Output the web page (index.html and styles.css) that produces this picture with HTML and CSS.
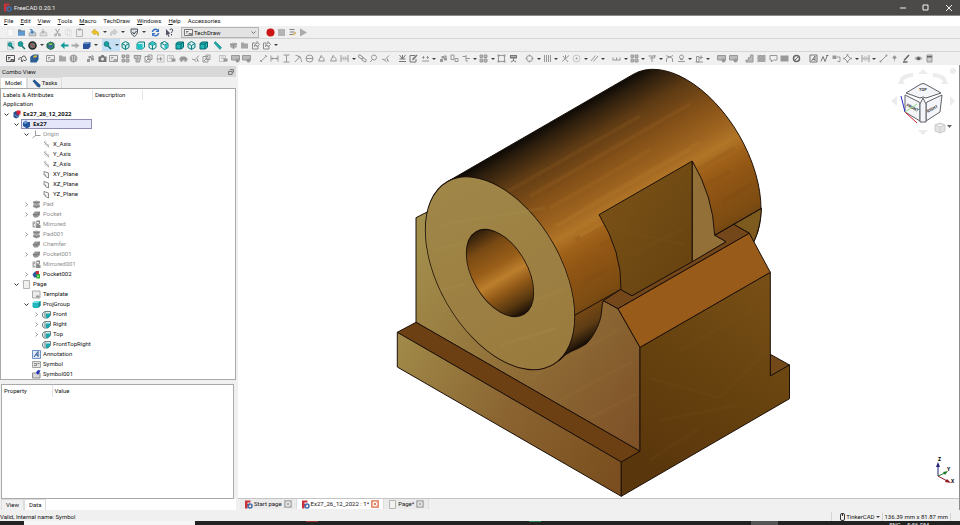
FILE: index.html
```
<!DOCTYPE html>
<html lang="en">
    <head>
        <meta charset="utf-8">
        <title>FreeCAD 0.20.1</title>
        <link rel="stylesheet" href="styles.css">
    </head>
    <body>

        <svg class="sprite" aria-hidden="true">
            <!-- file and edit -->
            <symbol id="new" viewBox="0 0 18 18"><path d="M4 2h10v14H4z" fill="#fafafa" stroke="#dcdcdc"/></symbol>
            <symbol id="open" viewBox="0 0 18 18"><path d="M2 3h6l1 2h7v10H2z" fill="#6b8499"/><path d="M3 7h13l-1 8H2z" fill="#5c9bd5"/></symbol>
            <symbol id="save" viewBox="0 0 18 18"><path d="M2 10l3-2h9l2 2v6H2z" fill="#c4c8cc" stroke="#8a9299"/><path d="M3 3c4-2 7 0 7 4h3l-5 5-4-5h3c0-2-1-3-4-4z" fill="#3f7fc0"/></symbol>
            <symbol id="saveas" viewBox="0 0 18 18"><path d="M2 10l3-2h9l2 2v6H2z" fill="#ddd" stroke="#a5a5a5"/><path d="M9 2v5h3l-4 4-4-4h3V2z" fill="#aaa"/></symbol>
            <symbol id="cut" viewBox="0 0 18 18"><path d="M5 2l6 10M13 2L7 12" fill="none" stroke="#9a9a9a" stroke-width="2"/><circle cx="5" cy="14" r="2" fill="none" stroke="#9a9a9a" stroke-width="2"/><circle cx="13" cy="14" r="2" fill="none" stroke="#9a9a9a" stroke-width="2"/></symbol>
            <symbol id="copy" viewBox="0 0 18 18"><path d="M3 2h8v11H3zM7 5h8v11H7z" fill="#f2f2f2" stroke="#d2d2d2"/></symbol>
            <symbol id="paste" viewBox="0 0 18 18"><path d="M3 3h12v14H3z" fill="#ededed" stroke="#b4b4b4" stroke-width="2"/><path d="M6 1h6v4H6z" fill="#a8a8a8"/></symbol>
            <symbol id="undo" viewBox="0 0 18 18"><path d="M1 8l7-6v4c6 0 9 4 6 10 0-4-2-5-6-5v3z" fill="#f0c420" stroke="#b8930c"/></symbol>
            <symbol id="redo" viewBox="0 0 18 18"><path d="M17 8l-7-6v4c-6 0-9 4-6 10 0-4 2-5 6-5v3z" fill="#cfcfcf" stroke="#b4b4b4"/></symbol>
            <symbol id="check" viewBox="0 0 18 18"><path d="M2 2h13v4c0 6-3 9-6 11-5-3-7-6-7-11z" fill="#dfe3e6" stroke="#4b5560" stroke-width="2"/><path d="M5 8l3 4 5-6" fill="none" stroke="#39424c" stroke-width="2"/></symbol>
            <symbol id="refresh" viewBox="0 0 18 18"><path d="M3 8a6 6 0 0 1 10-4M15 10a6 6 0 0 1-10 4" fill="none" stroke="#3473c0" stroke-width="3"/><path d="M16 1v7H9zM2 17v-7h7z" fill="#3473c0"/></symbol>
            <symbol id="whats" viewBox="0 0 18 18"><path d="M2 2l9 9-4 1 2 5-2 1-2-5-3 2z" fill="#556"/><path d="M10 4c1-4 7-2 5 2-1 2-2 1-2 4M13 12v3" fill="none" stroke="#36424e" stroke-width="2"/></symbol>
            <!-- macro -->
            <symbol id="record" viewBox="0 0 18 18"><circle cx="9" cy="9" r="8" fill="#cc1414"/></symbol>
            <symbol id="stop" viewBox="0 0 18 18"><path d="M2 2h14v14H2z" fill="#b4b4b4"/></symbol>
            <symbol id="macros" viewBox="0 0 18 18"><path d="M3 3h10M4 8h9M3 13h8" stroke="#7c7c7c" stroke-width="2"/><path d="M8 13l7-5 2 2-6 5z" fill="#d5ad5c"/></symbol>
            <symbol id="play" viewBox="0 0 18 18"><path d="M2 1l14 8-14 8z" fill="#a9a9a9"/></symbol>
            <!-- view -->
            <symbol id="fitall" viewBox="0 0 18 18"><path d="M3 1h13v16H3z" fill="#dcecec" stroke="#9fb4b4"/><circle cx="8" cy="7" r="4" fill="#16a3a3" stroke="#075e5e"/><path d="M10 10l5 5" stroke="#075e5e" stroke-width="3"/></symbol>
            <symbol id="lens" viewBox="0 0 18 18"><circle cx="7" cy="6" r="5" fill="#18a0a0" stroke="#0b6868"/><path d="M10 10l6 6" stroke="#0c7070" stroke-width="3"/></symbol>
            <symbol id="drawstyle" viewBox="0 0 18 18"><circle cx="9" cy="9" r="7" fill="#6b7373" stroke="#202626" stroke-width="3"/><path d="M5 5l8 8" stroke="#c33" stroke-width="2"/></symbol>
            <symbol id="bbox" viewBox="0 0 18 18"><path d="M2 6l7-4 7 3v9l-7 3-7-4z" fill="#2c8f5f" stroke="#1f5a50" stroke-width="2"/><path d="M5 6h8v7H5z" fill="#3c5fb0"/><path d="M6 5h6v3H6z" fill="#88c840"/></symbol>
            <symbol id="back" viewBox="0 0 18 18"><path d="M1 9l8-7v5h8v4H9v5z" fill="#169a9a"/></symbol>
            <symbol id="forward" viewBox="0 0 18 18"><path d="M17 9l-8-6v4H1v4h8v4z" fill="#aaa"/></symbol>
            <symbol id="linkcube" viewBox="0 0 18 18"><path d="M2 6l4-4h11v9l-4 5H2z" fill="#28539a"/><path d="M2 6l4-4h11l-4 4z" fill="#6f95ce"/></symbol>
            <symbol id="iso" viewBox="0 0 18 18"><path d="M9 1l7 4v8l-7 4-7-4V5zM2 5l7 4 7-4M9 9v8" fill="#c5eded" stroke="#0c7d80" stroke-width="2"/></symbol>
            <symbol id="front" viewBox="0 0 18 18"><path d="M2 5l4-3h11v10l-4 4H2z" fill="#bfeeee" stroke="#0b7b7f" stroke-width="2"/><path d="M2 6h11v10H2z" fill="#1fc3c5"/></symbol>
            <symbol id="top" viewBox="0 0 18 18"><path d="M9 1l7 4v8l-7 4-7-4V5zM2 5l7 4 7-4M9 9v8" fill="#dff5f5" stroke="#0c7d80" stroke-width="2"/><path d="M9 2l6 3-6 4-6-4z" fill="#25c3c5"/></symbol>
            <symbol id="right" viewBox="0 0 18 18"><path d="M2 4l7-3 7 4v8l-7 4-7-5zM2 4l7 4 7-3" fill="#dff5f5" stroke="#0c7d80" stroke-width="2"/><path d="M9 9l6-3v7l-6 3z" fill="#25c3c5"/></symbol>
            <symbol id="rear" viewBox="0 0 18 18"><path d="M2 5l4-3h11v10l-4 4H2z" fill="#20b6b9" stroke="#07676b" stroke-width="2"/><path d="M2 6h10v10M12 6l4-4" fill="none" stroke="#07676b" stroke-width="2"/></symbol>
            <symbol id="measure" viewBox="0 0 18 18"><path d="M2 4l3-3 12 12-3 4z" fill="#1cabad" stroke="#0b7175"/></symbol>
            <symbol id="part" viewBox="0 0 18 18"><path d="M2 6l6-3 8 2v7l-7 4-7-4z" fill="#b0b0b0"/><path d="M9 8v7M2 6l7 2 6-3" fill="none" stroke="#8b8b8b" stroke-width="2"/></symbol>
            <symbol id="folder" viewBox="0 0 18 18"><path d="M2 3h6l1 2h7v10H2z" fill="#a6a6a6"/></symbol>
            <symbol id="export" viewBox="0 0 18 18"><path d="M9 4H3v12h11v-5" fill="none" stroke="#8b8b8b" stroke-width="2"/><path d="M7 11c0-5 3-6 5-6V1l5 6-5 5V9c-2 0-4 0-5 2z" fill="none" stroke="#8b8b8b" stroke-width="2"/></symbol>
            <!-- techdraw pages and views -->
            <symbol id="page" viewBox="0 0 18 18"><path d="M1 3h16v12H1z" fill="#eee" stroke="currentColor" stroke-width="2"/><path d="M4 7h5M4 10h3M10 11h5v3h-5z" fill="none" stroke="currentColor" stroke-width="2"/></symbol>
            <symbol id="redraw" viewBox="0 0 18 18"><path d="M2 12c-2-5 4-6 5-3 1-7 9-6 8-1 3 1 2 5 0 5h-3M6 10l2 6 3-5" fill="none" stroke="currentColor" stroke-width="2"/></symbol>
            <symbol id="view" viewBox="0 0 18 18"><path d="M1 5l6-4h10v10l-4 6H1z" fill="#245c9c"/><path d="M1 6h10v10H1z" fill="#32608f"/><path d="M8 3h7l-3 4H6z" fill="#e7bd33"/></symbol>
            <symbol id="globe" viewBox="0 0 18 18"><circle cx="9" cy="9" r="7" fill="#ccc" stroke="currentColor" stroke-width="2"/><path d="M9 2v14M5 5v8M13 5v8" stroke="currentColor" stroke-width="2"/></symbol>
            <symbol id="cluster" viewBox="0 0 18 18"><path d="M5 4h6v5H5zM10 7h6v6h-6zM2 10h6v6H2z" fill="currentColor"/><path d="M11 1l5 4-4 2z" fill="currentColor"/></symbol>
            <symbol id="camera" viewBox="0 0 18 18"><path d="M1 5h4l2-3h4l2 3h4v11H1z" fill="currentColor"/><circle cx="9" cy="10" r="3" fill="#eee"/></symbol>
            <symbol id="blocks" viewBox="0 0 18 18"><path d="M2 2h5v5H2zM10 2h6v5h-6zM2 10h5v6H2zM10 10h6v6h-6z" fill="#bbb" stroke="currentColor" stroke-width="2"/></symbol>
            <symbol id="section" viewBox="0 0 18 18"><path d="M2 3h14l-3 13H6V9H3z" fill="#c4c4c4" stroke="currentColor" stroke-width="2"/><path d="M6 9h7M9 3v12" stroke="currentColor"/></symbol>
            <symbol id="boxarrow" viewBox="0 0 18 18"><path d="M3 2h13v14H3z" fill="none" stroke="currentColor"/><path d="M1 9h7V5l5 5-5 4v-3H1z" fill="currentColor"/></symbol>
            <symbol id="boxslash" viewBox="0 0 18 18"><path d="M2 5h10v11H2zM8 2h8v9H8z" fill="none" stroke="currentColor" stroke-width="2"/><path d="M4 14l6-6" stroke="currentColor" stroke-width="2"/></symbol>
            <symbol id="truck" viewBox="0 0 18 18"><path d="M1 9l3-4h8l5 4v4H1z" fill="currentColor"/><circle cx="5" cy="14" r="2" fill="currentColor"/><circle cx="13" cy="14" r="2" fill="currentColor"/></symbol>
            <symbol id="clip" viewBox="0 0 18 18"><path d="M1 3h12v12H1z" fill="none" stroke="currentColor" stroke-width="1"/><path d="M4 6h7M4 9h7" stroke="currentColor"/><path d="M9 9h8v6H9z" fill="currentColor"/></symbol>
            <!-- techdraw dimensions -->
            <symbol id="d-diag" viewBox="0 0 18 18"><path d="M3 15L15 4M2 12l4 4M12 2l4 4" fill="none" stroke="currentColor" stroke-width="2"/></symbol>
            <symbol id="d-h" viewBox="0 0 18 18"><path d="M2 3v12M16 3v12M2 9h14M5 7L3 9l2 2M13 7l2 2-2 2" fill="none" stroke="currentColor" stroke-width="2"/></symbol>
            <symbol id="d-v" viewBox="0 0 18 18"><path d="M3 2h12M3 16h12M9 2v14" fill="none" stroke="currentColor" stroke-width="2"/></symbol>
            <symbol id="d-rad" viewBox="0 0 18 18"><path d="M3 3c8 0 12 5 12 13M2 16l9-10M8 5h4v4" fill="none" stroke="currentColor" stroke-width="2"/></symbol>
            <symbol id="d-dia" viewBox="0 0 18 18"><circle cx="9" cy="9" r="7" fill="none" stroke="currentColor" stroke-width="2"/><path d="M2 9h14" stroke="currentColor" stroke-width="2"/></symbol>
            <symbol id="d-ang" viewBox="0 0 18 18"><path d="M9 2L3 14h12M6 7c5-3 9 1 8 7" fill="none" stroke="currentColor" stroke-width="2"/></symbol>
            <symbol id="d-ext" viewBox="0 0 18 18"><path d="M2 2v14M16 2v14" fill="none" stroke="currentColor" stroke-width="2"/><path d="M6 6h6v6H6zM2 9h14" fill="none" stroke="currentColor"/></symbol>
            <symbol id="link" viewBox="0 0 18 18"><rect x="1" y="3" width="9" height="5" rx="2" transform="rotate(35 5 5)" fill="none" stroke="currentColor" stroke-width="2"/><rect x="8" y="9" width="9" height="5" rx="2" transform="rotate(35 12 11)" fill="none" stroke="currentColor" stroke-width="2"/></symbol>
            <symbol id="balloon" viewBox="0 0 18 18"><circle cx="10" cy="7" r="5" fill="none" stroke="currentColor" stroke-width="2"/><path d="M7 11l-5 5" stroke="currentColor" stroke-width="2"/></symbol>
            <symbol id="axo" viewBox="0 0 18 18"><path d="M2 10l5 2 9-9M7 12l4 4M13 9v5h3" fill="none" stroke="currentColor" stroke-width="2"/></symbol>
            <!-- techdraw extensions -->
            <symbol id="stamp" viewBox="0 0 18 18"><path d="M3 2l6 8 6-8M9 2v7M3 10h12M2 15h14" fill="none" stroke="currentColor" stroke-width="2"/></symbol>
            <symbol id="edit" viewBox="0 0 18 18"><path d="M12 3H2v13h12v-6" fill="none" stroke="currentColor" stroke-width="2"/><path d="M7 9l8-8 2 2-7 8-4 2z" fill="currentColor"/></symbol>
            <symbol id="spread" viewBox="0 0 18 18"><path d="M2 14h14M2 7h5M11 7h5M5 4v6M13 4v6" fill="none" stroke="currentColor" stroke-width="2"/></symbol>
            <symbol id="twobox" viewBox="0 0 18 18"><path d="M2 2h6v9H2zM10 9h6v6h-6z" fill="none" stroke="currentColor" stroke-width="2"/></symbol>
            <symbol id="steps" viewBox="0 0 18 18"><path d="M1 5h7M8 2v12M8 9h8M8 14h4" fill="none" stroke="currentColor" stroke-width="2"/></symbol>
            <symbol id="frame" viewBox="0 0 18 18"><path d="M3 3h12v12H3z" fill="none" stroke="currentColor" stroke-width="2"/><path d="M1 1h4v4H1zM13 1h4v4h-4zM1 13h4v4H1zM13 13h4v4h-4z" fill="currentColor"/></symbol>
            <symbol id="desk" viewBox="0 0 18 18"><path d="M2 2h14v7H2z" fill="currentColor"/><path d="M4 5h10" stroke="#eee"/><path d="M9 9v5M4 16l5-3 5 3" fill="none" stroke="currentColor" stroke-width="2"/></symbol>
            <symbol id="target" viewBox="0 0 18 18"><circle cx="9" cy="9" r="6" fill="none" stroke="currentColor" stroke-width="2"/><path d="M9 1v4M9 13v4M1 9h4M13 9h4" stroke="currentColor" stroke-width="2"/></symbol>
            <symbol id="bars" viewBox="0 0 18 18"><path d="M3 2v14M7 2v14M11 2v14M15 2v14" stroke="currentColor" stroke-width="2"/></symbol>
            <symbol id="star" viewBox="0 0 18 18"><path d="M2 15L16 3M4 4l10 12M9 2v8" stroke="currentColor" stroke-width="2"/></symbol>
            <symbol id="circdot" viewBox="0 0 18 18"><circle cx="9" cy="9" r="7" fill="none" stroke="currentColor" stroke-width="1"/><circle cx="9" cy="9" r="2" fill="currentColor"/></symbol>
            <symbol id="parallel" viewBox="0 0 18 18"><path d="M2 14L11 3M7 15l9-11" stroke="currentColor" stroke-width="2"/></symbol>
            <symbol id="ticks" viewBox="0 0 18 18"><path d="M1 12h16M2 7v5M9 7v5M16 7v5" stroke="currentColor" stroke-width="2"/></symbol>
            <symbol id="tee" viewBox="0 0 18 18"><path d="M1 4h15M8 4v12M4 8h9M13 2v6" fill="none" stroke="currentColor" stroke-width="2"/></symbol>
            <symbol id="curve" viewBox="0 0 18 18"><path d="M2 3c4 3 10 3 14 0M3 16V9c3-3 9-3 12 0v7" fill="none" stroke="currentColor" stroke-width="2"/></symbol>
            <symbol id="person" viewBox="0 0 18 18"><circle cx="9" cy="6" r="4" fill="none" stroke="currentColor" stroke-width="2"/><path d="M2 15h14M6 11h6" stroke="currentColor" stroke-width="2"/></symbol>
            <symbol id="hole" viewBox="0 0 18 18"><path d="M3 16V5h5v11zM8 7h8M1 16h15M12 3v8" fill="none" stroke="currentColor" stroke-width="2"/></symbol>
            <symbol id="image" viewBox="0 0 18 18"><path d="M1 3h16v9H1z" fill="#bbb" stroke="currentColor" stroke-width="2"/><circle cx="13" cy="13" r="4" fill="currentColor"/></symbol>
            <symbol id="stairs" viewBox="0 0 18 18"><path d="M2 16v-4h5V7h4V2h5v14z" fill="#bbb" stroke="currentColor" stroke-width="2"/></symbol>
            <symbol id="hatch" viewBox="0 0 18 18"><path d="M1 2h16v14H1z" fill="#aaa"/><path d="M1 9l7-7M2 15L15 2M9 15l7-7" stroke="currentColor" stroke-width="2"/></symbol>
            <symbol id="callout" viewBox="0 0 18 18"><path d="M2 3h14v9H9l-4 4v-4H2z" fill="none" stroke="currentColor" stroke-width="2"/></symbol>
            <symbol id="block" viewBox="0 0 18 18"><path d="M1 3h16v12H1z" fill="currentColor"/></symbol>
            <symbol id="nosign" viewBox="0 0 18 18"><circle cx="9" cy="9" r="6" fill="none" stroke="#666" stroke-width="3"/><path d="M5 13l8-8" stroke="#666" stroke-width="2"/></symbol>
            <symbol id="annot" viewBox="0 0 18 18"><path d="M2 2h14v14H2z" fill="none" stroke="currentColor" stroke-width="2"/><path d="M5 14L12 4v10M7 11h5" fill="none" stroke="currentColor" stroke-width="2"/></symbol>
            <symbol id="poly" viewBox="0 0 18 18"><path d="M2 15L6 5l4 10 4-11M12 3h5" fill="none" stroke="currentColor" stroke-width="2"/></symbol>
            <symbol id="papers" viewBox="0 0 18 18"><path d="M1 3h8v7H1z" fill="currentColor"/><path d="M10 6h6v9h-5" fill="none" stroke="currentColor" stroke-width="2"/></symbol>
            <symbol id="diamond" viewBox="0 0 18 18"><path d="M9 3l6 6-6 6-6-6z" fill="none" stroke="currentColor" stroke-width="2"/><circle cx="9" cy="2" r="2" fill="currentColor"/><circle cx="9" cy="16" r="2" fill="currentColor"/><circle cx="2" cy="9" r="2" fill="currentColor"/><circle cx="16" cy="9" r="2" fill="currentColor"/></symbol>
            <symbol id="line" viewBox="0 0 18 18"><path d="M3 15L15 3" stroke="currentColor" stroke-width="2"/><circle cx="3" cy="15" r="2" fill="currentColor"/><circle cx="15" cy="3" r="2" fill="currentColor"/></symbol>
            <symbol id="cosmetic" viewBox="0 0 18 18"><path d="M9 3l4 4-4 4-4-4zM9 11v4" fill="currentColor" stroke="currentColor"/></symbol>
            <symbol id="pen" viewBox="0 0 18 18"><path d="M2 16h9M4 13L14 2" stroke="#666" stroke-width="3"/></symbol>
            <symbol id="eye" viewBox="0 0 18 18"><path d="M1 9c4-6 12-6 16 0-4 5-12 5-16 0z" fill="#aaa"/><circle cx="9" cy="9" r="3" fill="#555"/></symbol>
            <symbol id="sheet" viewBox="0 0 18 18"><path d="M4 2h10v14H4z" fill="#ccc" stroke="currentColor" stroke-width="2"/><path d="M4 4h10v3H4z" fill="#666"/></symbol>
            <!-- tree items -->
            <symbol id="t-doc" viewBox="0 0 18 18"><path d="M3 5l5-3 6 3v9l-6 3-5-3z" fill="#244f8d"/><path d="M9 1h8v8H9z" fill="#cf2436"/><path d="M5 9l6 5 4-4" fill="none" stroke="#7da1d2" stroke-width="2"/></symbol>
            <symbol id="t-body" viewBox="0 0 18 18"><path d="M2 5l6-4 3 3h5v9l-6 4-8-5z" fill="#23569b"/><path d="M2 5l6-4 3 4-4 3zM8 12l7-4" fill="#6d9bd3"/></symbol>
            <symbol id="t-origin" viewBox="0 0 18 18"><path d="M7 1v10h10M7 11l-6 5" fill="none" stroke="#9a9a9a" stroke-width="2"/></symbol>
            <symbol id="t-axis" viewBox="0 0 18 18"><path d="M4 3l4-1v7M4 8l9 7v-6H8" fill="none" stroke="#b4b4b4"/><path d="M4 4l10 9" stroke="#9a9a9a" stroke-width="2"/></symbol>
            <symbol id="t-plane" viewBox="0 0 18 18"><path d="M4 3l9 3v10l-6-3v-3H4z" fill="#f4f4f4" stroke="#8b8b8b" stroke-width="2"/></symbol>
            <symbol id="t-pad" viewBox="0 0 18 18"><path d="M2 3l7-2 7 2v3l-2 2 2 3v3l-7 3-7-3v-3l2-3-2-2z" fill="#a6a6a6"/><path d="M3 4l6 2 6-2M3 12l6 2 6-2" fill="none" stroke="#777" stroke-width="2"/></symbol>
            <symbol id="t-pocket" viewBox="0 0 18 18"><path d="M1 9l5-6h10v7l-5 5H4z" fill="#949494"/><path d="M2 9l8 1 5-6" fill="none" stroke="#777" stroke-width="2"/></symbol>
            <symbol id="t-mirror" viewBox="0 0 18 18"><path d="M1 3h6v12H1z" fill="#aaa"/><path d="M9 1h7v6l-2 3h3v6H8z" fill="#8a8a8a"/><path d="M10 4h4v3h-4zM4 8h2v4H4z" fill="#eee"/></symbol>
            <symbol id="t-tip" viewBox="0 0 18 18"><path d="M1 9l5-6h6v12H4z" fill="#2d55a0"/><path d="M8 2h6v6H8z" fill="#c8303c"/><path d="M9 8h7v9H9z" fill="#2cb32c"/><path d="M11 11h2v3h-2z" fill="#fff"/></symbol>
            <symbol id="t-page" viewBox="0 0 18 18"><path d="M3 1h12v16H3z" fill="#f1f1ef" stroke="#b4b4b0" stroke-width="2"/></symbol>
            <symbol id="t-template" viewBox="0 0 18 18"><path d="M1 2h15v14H1z" fill="#ececec" stroke="#aaa" stroke-width="2"/><path d="M8 11h7v4H8z" fill="#999"/></symbol>
            <symbol id="t-group" viewBox="0 0 18 18"><path d="M1 6l5-4h11v9l-5 5H3l-2-3z" fill="#1fb8bd"/><path d="M1 6l5-4h11l-5 4z" fill="#72e0e0"/><path d="M13 6l4-4v9l-4 5z" fill="#15898f"/></symbol>
            <symbol id="t-view" viewBox="0 0 18 18"><path d="M1 7l4-4h12v8l-5 5H4l-3-4z" fill="#dfeaea" stroke="#6f8486" stroke-width="2"/><path d="M8 7h8v4l-4 5H8z" fill="#19a9ad"/><path d="M6 4v10" stroke="#6f8486" stroke-width="2"/></symbol>
            <symbol id="t-annot" viewBox="0 0 18 18"><path d="M1 1h16v16H1z" fill="#dce8f6" stroke="#6c93c4" stroke-width="2"/><path d="M4 14L12 3v11M7 10h6" fill="none" stroke="#35588c" stroke-width="2"/></symbol>
            <symbol id="t-symbol" viewBox="0 0 18 18"><path d="M1 3h16v12H1z" fill="#e4e4e2" stroke="#a4a4a2" stroke-width="2"/><path d="M4 7h5v4H4M11 7h4" fill="none" stroke="#8a8a8a" stroke-width="2"/></symbol>
            <symbol id="t-touched" viewBox="0 0 18 18"><path d="M1 6h15v10H1z" fill="#d8d8d8" stroke="#8b8b8b" stroke-width="2"/><path d="M8 5l4 5 5-9-5-1z" fill="#2533b5"/></symbol>
            <!-- window -->
            <symbol id="logo" viewBox="0 0 18 18"><path d="M2 1h11v4H7v3h4v4H7v5H2z" fill="#cb333b"/><circle cx="12" cy="12" r="4" fill="none" stroke="#3f6eab" stroke-width="3"/></symbol>
            <symbol id="close" viewBox="0 0 18 18"><path d="M2 2h14v14H2z" fill="none" stroke="currentColor" stroke-width="3"/><path d="M6 6l6 6M12 6l-6 6" stroke="currentColor" stroke-width="2"/></symbol>
            <symbol id="chev-down" viewBox="0 0 10 10"><path d="M1 3l4 4 4-4" fill="none" stroke="currentColor" stroke-width="2"/></symbol>
            <symbol id="chev-right" viewBox="0 0 10 10"><path d="M3 1l4 4-4 4" fill="none" stroke="currentColor" stroke-width="1"/></symbol>
        </svg>

        <header class="titlebar">
            <svg class="icon"><use href="#logo"/></svg>
            <span class="title">FreeCAD 0.20.1</span>
            <button title="Minimize"><svg viewBox="0 0 8 8"><path d="M1 4h6"/></svg></button>
            <button title="Maximize"><svg viewBox="0 0 8 8"><path d="M1 1h5v5H1z"/></svg></button>
            <button title="Close"><svg viewBox="0 0 8 8"><path d="M1 1l6 6M7 1L1 7"/></svg></button>
        </header>

        <nav class="menubar">
            <button><u>F</u>ile</button>
            <button><u>E</u>dit</button>
            <button><u>V</u>iew</button>
            <button><u>T</u>ools</button>
            <button><u>M</u>acro</button>
            <button>TechDraw</button>
            <button><u>W</u>indows</button>
            <button><u>H</u>elp</button>
            <button>Accessories</button>
        </nav>

        <div class="toolbar">
            <i class="handle"></i>
            <button title="New"><svg><use href="#new"/></svg></button>
            <button title="Open"><svg><use href="#open"/></svg></button>
            <button title="Save"><svg><use href="#save"/></svg></button>
            <button title="Save as"><svg><use href="#saveas"/></svg></button>
            <i class="sep"></i>
            <button title="Cut"><svg><use href="#cut"/></svg></button>
            <button title="Copy"><svg><use href="#copy"/></svg></button>
            <button title="Paste"><svg><use href="#paste"/></svg></button>
            <i class="handle"></i>
            <button title="Undo"><svg><use href="#undo"/></svg></button>
            <button class="drop" title="Undo list"></button>
            <button title="Redo"><svg><use href="#redo"/></svg></button>
            <button class="drop" title="Redo list"></button>
            <i class="sep"></i>
            <button title="Validate"><svg><use href="#check"/></svg></button>
            <button class="drop" title="More"></button>
            <i class="sep"></i>
            <button title="Refresh"><svg><use href="#refresh"/></svg></button>
            <i class="sep"></i>
            <button title="What's this?"><svg><use href="#whats"/></svg></button>
            <i class="handle"></i>
            <label class="workbench">
                <svg class="icon"><use href="#page"/></svg>
                <select aria-label="Workbench">
                    <option selected>TechDraw</option>
                    <option>Part Design</option>
                    <option>Sketcher</option>
                </select>
                <svg class="chevron"><use href="#chev-down"/></svg>
            </label>
            <i class="handle"></i>
            <button title="Record macro"><svg><use href="#record"/></svg></button>
            <button title="Stop macro"><svg><use href="#stop"/></svg></button>
            <button title="Macros"><svg><use href="#macros"/></svg></button>
            <button title="Run macro"><svg><use href="#play"/></svg></button>
        </div>

        <div class="toolbar">
            <i class="handle"></i>
            <button title="Fit all"><svg><use href="#fitall"/></svg></button>
            <button title="Fit selection"><svg><use href="#lens"/></svg></button>
            <button title="Draw style"><svg><use href="#drawstyle"/></svg></button>
            <button class="drop" title="Draw styles"></button>
            <button title="Bounding box"><svg><use href="#bbox"/></svg></button>
            <i class="sep"></i>
            <button title="Back"><svg><use href="#back"/></svg></button>
            <button title="Forward"><svg><use href="#forward"/></svg></button>
            <button title="Linked object"><svg><use href="#linkcube"/></svg></button>
            <button class="drop" title="Link navigation"></button>
            <i class="sep"></i>
            <span class="active">
                <button title="Sync view"><svg><use href="#lens"/></svg></button>
                <button class="drop" title="Sync options"></button>
            </span>
            <button title="Isometric"><svg><use href="#iso"/></svg></button>
            <i class="sep"></i>
            <span class="wide">
                <button title="Front"><svg><use href="#front"/></svg></button>
                <button title="Top"><svg><use href="#top"/></svg></button>
                <button title="Right"><svg><use href="#right"/></svg></button>
            </span>
            <i class="sep"></i>
            <span class="wide">
                <button title="Rear"><svg><use href="#rear"/></svg></button>
                <button title="Bottom"><svg><use href="#iso"/></svg></button>
                <button title="Left"><svg><use href="#rear"/></svg></button>
            </span>
            <i class="sep"></i>
            <button title="Measure"><svg><use href="#measure"/></svg></button>
            <i class="handle"></i>
            <button title="Create part"><svg><use href="#part"/></svg></button>
            <button title="Create group"><svg><use href="#folder"/></svg></button>
            <button title="Make link"><svg><use href="#export"/></svg></button>
            <button title="Link actions"><svg><use href="#export"/></svg></button>
            <button class="drop" title="Link action list"></button>
        </div>

        <div class="toolbar techdraw">
            <i class="handle"></i>
            <button class="dark" title="Insert page"><svg><use href="#page"/></svg></button>
            <button class="dark" title="Redraw page"><svg><use href="#redraw"/></svg></button>
            <button title="Insert view"><svg><use href="#view"/></svg></button>
            <i class="handle"></i>
            <button title="Page from template"><svg><use href="#page"/></svg></button>
            <button title="Open folder"><svg><use href="#folder"/></svg></button>
            <button title="Web view"><svg><use href="#globe"/></svg></button>
            <i class="handle"></i>
            <button title="Insert view"><svg><use href="#cluster"/></svg></button>
            <button class="mid" title="Active view"><svg><use href="#camera"/></svg></button>
            <button title="Projection group"><svg><use href="#page"/></svg></button>
            <button title="Group"><svg><use href="#blocks"/></svg></button>
            <button title="Section view"><svg><use href="#section"/></svg></button>
            <button title="Detail view"><svg><use href="#boxslash"/></svg></button>
            <button title="Draft view"><svg><use href="#boxarrow"/></svg></button>
            <button title="Arch view"><svg><use href="#clip"/></svg></button>
            <button title="Spreadsheet view"><svg><use href="#truck"/></svg></button>
            <button title="Move view"><svg><use href="#axo"/></svg></button>
            <button title="Share view"><svg><use href="#boxslash"/></svg></button>
            <i class="handle"></i>
            <button title="Clip group"><svg><use href="#clip"/></svg></button>
            <button title="Add to clip"><svg><use href="#image"/></svg></button>
            <button title="Remove from clip"><svg><use href="#image"/></svg></button>
            <i class="handle"></i>
            <button title="Length"><svg><use href="#d-diag"/></svg></button>
            <button title="Horizontal"><svg><use href="#d-h"/></svg></button>
            <button title="Vertical"><svg><use href="#d-v"/></svg></button>
            <button title="Radius"><svg><use href="#d-rad"/></svg></button>
            <button title="Diameter"><svg><use href="#d-dia"/></svg></button>
            <button title="Angle"><svg><use href="#d-ang"/></svg></button>
            <button title="3-point angle"><svg><use href="#d-ang"/></svg></button>
            <button title="Extent"><svg><use href="#d-ext"/></svg></button>
            <button class="drop" title="Extents"></button>
            <button title="Link dimension"><svg><use href="#link"/></svg></button>
            <button title="Balloon"><svg><use href="#balloon"/></svg></button>
            <button title="Axonometric"><svg><use href="#axo"/></svg></button>
            <i class="handle"></i>
            <button class="mid" title="Line attributes"><svg><use href="#stamp"/></svg></button>
            <button class="mid" title="Edit"><svg><use href="#edit"/></svg></button>
            <button title="Extend line"><svg><use href="#spread"/></svg></button>
            <button class="drop" title="Extend or shorten"></button>
            <button title="Lock view"><svg><use href="#cluster"/></svg></button>
            <button title="Position view"><svg><use href="#twobox"/></svg></button>
            <button title="Position chain"><svg><use href="#steps"/></svg></button>
            <button class="drop" title="Positions"></button>
            <button title="Cascade"><svg><use href="#blocks"/></svg></button>
            <button class="drop" title="Cascades"></button>
            <button title="Area"><svg><use href="#frame"/></svg></button>
            <button class="mid" title="Customize"><svg><use href="#desk"/></svg></button>
            <i class="handle"></i>
            <button title="Circle centerlines"><svg><use href="#target"/></svg></button>
            <button class="drop" title="Centerlines"></button>
            <button title="Thread"><svg><use href="#bars"/></svg></button>
            <button class="drop" title="Threads"></button>
            <button title="Intersection"><svg><use href="#star"/></svg></button>
            <button title="Cosmetic circle"><svg><use href="#circdot"/></svg></button>
            <button class="drop" title="Circles"></button>
            <button title="Parallel line"><svg><use href="#parallel"/></svg></button>
            <button class="drop" title="Lines"></button>
            <i class="handle"></i>
            <button title="Chain dimension"><svg><use href="#ticks"/></svg></button>
            <button class="drop" title="Chains"></button>
            <button title="Coordinate dimension"><svg><use href="#blocks"/></svg></button>
            <button class="drop" title="Coordinates"></button>
            <button title="Chamfer dimension"><svg><use href="#tee"/></svg></button>
            <button class="drop" title="Chamfers"></button>
            <button title="Arc length"><svg><use href="#curve"/></svg></button>
            <button title="Prefix"><svg><use href="#person"/></svg></button>
            <button class="drop" title="Prefixes"></button>
            <button title="Decimals"><svg><use href="#hole"/></svg></button>
            <button class="drop" title="Decimal places"></button>
            <i class="handle"></i>
            <button title="Export SVG"><svg><use href="#image"/></svg></button>
            <button title="Export DXF"><svg><use href="#image"/></svg></button>
            <i class="handle"></i>
            <button title="Hatch"><svg><use href="#stairs"/></svg></button>
            <button title="Geometric hatch"><svg><use href="#hatch"/></svg></button>
            <button title="Insert symbol"><svg><use href="#callout"/></svg></button>
            <button title="Insert image"><svg><use href="#block"/></svg></button>
            <button title="Toggle frames"><svg><use href="#nosign"/></svg></button>
            <i class="handle"></i>
            <button class="mid" title="Annotation"><svg><use href="#annot"/></svg></button>
            <button class="mid" title="Leader line"><svg><use href="#poly"/></svg></button>
            <button title="Rich text"><svg><use href="#papers"/></svg></button>
            <button title="Vertex"><svg><use href="#diamond"/></svg></button>
            <button class="drop" title="Vertices"></button>
            <button title="Centerline"><svg><use href="#d-ext"/></svg></button>
            <button class="drop" title="Face centerlines"></button>
            <button title="Cosmetic line"><svg><use href="#line"/></svg></button>
            <button title="Remove cosmetic"><svg><use href="#cosmetic"/></svg></button>
            <button title="Line style"><svg><use href="#pen"/></svg></button>
            <button title="Show all"><svg><use href="#eye"/></svg></button>
            <button title="Weld symbol"><svg><use href="#sheet"/></svg></button>
        </div>

        <main>
            <aside class="combo">
                <div class="docktitle">
                    <span>Combo View</span>
                    <button title="Float"><svg viewBox="0 0 10 10"><path d="M3 1h6v5M1 4h6v5H1z"/></svg></button>
                </div>
                <div class="tabs">
                    <button class="selected">Model</button>
                    <button class="tasks"><svg class="icon" viewBox="0 0 18 18"><path d="M1 4l4-3 12 11-1 5-5-1z" fill="#25588f"/></svg>Tasks</button>
                </div>

                <div class="tree">
                    <div class="head"><span>Labels &amp; Attributes</span><span>Description</span></div>
                    <div class="application">Application</div>
                    <ul>
                        <li>
                            <div class="row bold"><button class="toggle" title="Collapse"><svg><use href="#chev-down"/></svg></button><svg class="icon"><use href="#t-doc"/></svg>Ex27_26_12_2022</div>
                            <ul>
                                <li>
                                    <div class="row bold"><button class="toggle" title="Collapse"><svg><use href="#chev-down"/></svg></button><span class="current"><svg class="icon"><use href="#t-body"/></svg>Ex27</span></div>
                                    <ul>
                                        <li>
                                            <div class="row off"><button class="toggle" title="Collapse"><svg><use href="#chev-down"/></svg></button><svg class="icon"><use href="#t-origin"/></svg>Origin</div>
                                            <ul>
                                                <li class="row leaf"><svg class="icon"><use href="#t-axis"/></svg>X_Axis</li>
                                                <li class="row leaf"><svg class="icon"><use href="#t-axis"/></svg>Y_Axis</li>
                                                <li class="row leaf"><svg class="icon"><use href="#t-axis"/></svg>Z_Axis</li>
                                                <li class="row leaf"><svg class="icon"><use href="#t-plane"/></svg>XY_Plane</li>
                                                <li class="row leaf"><svg class="icon"><use href="#t-plane"/></svg>XZ_Plane</li>
                                                <li class="row leaf"><svg class="icon"><use href="#t-plane"/></svg>YZ_Plane</li>
                                            </ul>
                                        </li>
                                        <li class="row off"><button class="toggle" title="Expand"><svg><use href="#chev-right"/></svg></button><svg class="icon"><use href="#t-pad"/></svg>Pad</li>
                                        <li class="row off"><button class="toggle" title="Expand"><svg><use href="#chev-right"/></svg></button><svg class="icon"><use href="#t-pocket"/></svg>Pocket</li>
                                        <li class="row off leaf"><svg class="icon"><use href="#t-mirror"/></svg>Mirrored</li>
                                        <li class="row off"><button class="toggle" title="Expand"><svg><use href="#chev-right"/></svg></button><svg class="icon"><use href="#t-pad"/></svg>Pad001</li>
                                        <li class="row off leaf"><svg class="icon"><use href="#t-pocket"/></svg>Chamfer</li>
                                        <li class="row off"><button class="toggle" title="Expand"><svg><use href="#chev-right"/></svg></button><svg class="icon"><use href="#t-pocket"/></svg>Pocket001</li>
                                        <li class="row off leaf"><svg class="icon"><use href="#t-mirror"/></svg>Mirrored001</li>
                                        <li class="row"><button class="toggle" title="Expand"><svg><use href="#chev-right"/></svg></button><svg class="icon"><use href="#t-tip"/></svg>Pocket002</li>
                                    </ul>
                                </li>
                                <li>
                                    <div class="row"><button class="toggle" title="Collapse"><svg><use href="#chev-down"/></svg></button><svg class="icon"><use href="#t-page"/></svg>Page</div>
                                    <ul>
                                        <li class="row leaf"><svg class="icon"><use href="#t-template"/></svg>Template</li>
                                        <li>
                                            <div class="row"><button class="toggle" title="Collapse"><svg><use href="#chev-down"/></svg></button><svg class="icon"><use href="#t-group"/></svg>ProjGroup</div>
                                            <ul>
                                                <li class="row"><button class="toggle" title="Expand"><svg><use href="#chev-right"/></svg></button><svg class="icon"><use href="#t-view"/></svg>Front</li>
                                                <li class="row"><button class="toggle" title="Expand"><svg><use href="#chev-right"/></svg></button><svg class="icon"><use href="#t-view"/></svg>Right</li>
                                                <li class="row"><button class="toggle" title="Expand"><svg><use href="#chev-right"/></svg></button><svg class="icon"><use href="#t-view"/></svg>Top</li>
                                                <li class="row leaf"><svg class="icon"><use href="#t-view"/></svg>FrontTopRight</li>
                                            </ul>
                                        </li>
                                        <li class="row leaf"><svg class="icon"><use href="#t-annot"/></svg>Annotation</li>
                                        <li class="row leaf"><svg class="icon"><use href="#t-symbol"/></svg>Symbol</li>
                                        <li class="row leaf"><svg class="icon"><use href="#t-touched"/></svg>Symbol001</li>
                                    </ul>
                                </li>
                            </ul>
                        </li>
                    </ul>
                </div>

                <div class="properties">
                    <table>
                        <tr><th>Property</th><th>Value</th></tr>
                    </table>
                </div>
                <div class="tabs bottom">
                    <button>View</button>
                    <button class="selected">Data</button>
                </div>
            </aside>

            <section class="mdi">
                <svg class="scene" viewBox="238 65 721 433" role="img" aria-label="Bearing block">
                    <defs>
                        <linearGradient id="g-cyl" gradientUnits="userSpaceOnUse" x1="447" y1="182" x2="553" y2="365">
                            <stop offset="0" stop-color="#0c0905"/>
                            <stop offset=".05" stop-color="#2b1d0d"/>
                            <stop offset=".16" stop-color="#5e3b14"/>
                            <stop offset=".3" stop-color="#855118"/>
                            <stop offset=".42" stop-color="#9d631f"/>
                            <stop offset=".5" stop-color="#b27628"/>
                            <stop offset=".57" stop-color="#9f6119"/>
                            <stop offset=".66" stop-color="#905514"/>
                            <stop offset=".82" stop-color="#7d4c12"/>
                            <stop offset=".92" stop-color="#5e3c14"/>
                            <stop offset=".97" stop-color="#2d1d0c"/>
                            <stop offset="1" stop-color="#080502"/>
                        </linearGradient>
                        <linearGradient id="g-hole" x1=".15" y1=".15" x2=".85" y2=".85">
                            <stop offset="0" stop-color="#2e1e0c"/>
                            <stop offset=".2" stop-color="#7a4a13"/>
                            <stop offset=".42" stop-color="#9a5f19"/>
                            <stop offset=".56" stop-color="#bc7f2d"/>
                            <stop offset=".7" stop-color="#935a18"/>
                            <stop offset=".88" stop-color="#55360f"/>
                            <stop offset="1" stop-color="#1b1007"/>
                        </linearGradient>
                        <linearGradient id="g-disk" x1="0" y1="0" x2="1" y2="1">
                            <stop offset="0" stop-color="#a0894a"/>
                            <stop offset="1" stop-color="#99783c"/>
                        </linearGradient>
                        <linearGradient id="g-front" gradientUnits="userSpaceOnUse" x1="400" y1="260" x2="640" y2="440">
                            <stop offset="0" stop-color="#a38f4c"/>
                            <stop offset=".5" stop-color="#916f38"/>
                            <stop offset="1" stop-color="#7e5127"/>
                        </linearGradient>
                        <linearGradient id="g-foot" gradientUnits="userSpaceOnUse" x1="397" y1="350" x2="621" y2="480">
                            <stop offset="0" stop-color="#a08948"/>
                            <stop offset=".5" stop-color="#8a6330"/>
                            <stop offset="1" stop-color="#7a4e1e"/>
                        </linearGradient>
                        <linearGradient id="g-side" gradientUnits="userSpaceOnUse" x1="770" y1="290" x2="660" y2="470">
                            <stop offset="0" stop-color="#774e15"/>
                            <stop offset=".5" stop-color="#66420f"/>
                            <stop offset="1" stop-color="#5a360c"/>
                        </linearGradient>
                        <linearGradient id="g-slot" x1="0" y1="0" x2="1" y2="1">
                            <stop offset="0" stop-color="#7d5418"/>
                            <stop offset="1" stop-color="#65410f"/>
                        </linearGradient>
                        <path id="cylinder" d="M447.2 181.8L633.5 74.2A105.6 61 60 0 1 739.1 257.2L552.8 364.8Z"/>
                    </defs>

                    <g class="solid">
                        <use href="#cylinder" fill="url(#g-cyl)"/>
                        <g class="grain">
                            <path d="M500 196L640 116M530 196L690 104M585 208L700 142M550 208L650 150" stroke="#d08a35"/>
                            <path d="M575 240L735 148M600 246L730 171M584 282L606 270M722 202L752 184" stroke="#6b3d0c"/>
                            <path d="M556 226L690 149M580 236L606 221" stroke="#e0a850"/>
                        </g>
                        <path d="M733.7 224.3L761.5 208.3Q760.5 228 753.7 242L749.3 233.3Z" fill="#7d5b1e"/>
                        <path d="M416 217.7L430 210.5L470 300L559.3 360.7Q566 353.5 571 351.5Q580 348 586 344C593 338 601 322 601.5 312Q602 304 603.3 300.7L618 308.7L640 347.3V451.3L416 322.3Z" fill="url(#g-front)"/>
                        <path d="M397.3 332.3L416 322.3L640 451.3L621.3 462Z" fill="#6c4013"/>
                        <path d="M397.3 332.3V367L621.3 496.3V462Z" fill="url(#g-foot)"/>
                        <path d="M770.3 354.3L789.5 365L770.3 376Z" fill="#74491a"/>
                        <path d="M640 347.3L770.3 272.3V376L789.5 365V398.7L621.3 496.3V462L640 451.3Z" fill="url(#g-side)"/>
                        <path d="M603.3 300.7L620.5 289.5L632 295.7L726 241.7L714.7 235.3L733.7 224.3L749.3 233.3L618 308.7Z" fill="#74471a"/>
                        <path d="M618 308.7L749.3 233.3L770.3 272.3L640 347.3Z" fill="#995b19"/>
                        <path d="M599 214.7L692.3 161V261.7L632 295.7L621 289.7Q622 252 599 214.7Z" fill="url(#g-slot)"/>
                        <path d="M692.3 161Q713 196 714.7 235.3L726 241.7L692.3 261.7Z" fill="#947039"/>
                        <circle r="86.3" transform="matrix(.866 .5 0 1 500 273.3)" fill="url(#g-disk)"/>
                        <circle r="38.9" transform="matrix(.866 .5 0 1 500 273)" fill="url(#g-hole)"/>
                        <path d="M574.3 315.5L620.5 289.5M714.7 235.3L761.5 208.3" fill="none"/>
                    </g>
                    <g class="grain wood">
                        <path d="M440 225L545 208M432 250L466 243M440 290L466 284M535 300L564 290M500 345L556 328" stroke="#b49c58"/>
                        <path d="M560 400L632 362M530 378L622 328M590 418L636 394" stroke="#a57c42"/>
                        <path d="M650 378L720 398L766 352M660 420L740 405M680 350L760 306M650 460L700 428" stroke="#805818"/>
                        <path d="M620 230L685 245M628 255L686 228" stroke="#865a1c"/>
                    </g>

                    <!-- navigation cube -->
                    <g class="navcube">
                        <path class="arrow" d="M923 69l5 5h-10zM923 135l5-5h-10zM891 101l6-5v10zM955 101l-5-5v10zM898 84l3-7c4-3 8-4 12-4v4c-4 0-7 1-10 4l2 3zM948 84l-3-7c-4-3-8-4-12-4v4c4 0 7 1 10 4l-2 3z"/>
                        <circle class="arrow" cx="953" cy="71" r="3"/>
                        <path d="M906 93L921 84Q923 83 925 84L941 93L926 98L923 97L920 98Z"/>
                        <path d="M905 95L919 102Q920 103 920 105V121L905 112Z"/>
                        <path d="M942 95L927 102Q926 103 926 105V121L940 112Z"/>
                        <path d="M923 98L926 104V122H920V104Z"/>
                        <text x="923" y="91">TOP</text>
                        <text x="912" y="109" transform="rotate(27 912 109)">FRONT</text>
                        <text x="933" y="110" transform="rotate(-27 933 110)">RIGHT</text>
                        <path class="z" d="M901 96L905 112"/>
                        <path class="x" d="M905 112L917 123"/>
                        <path class="y" d="M905 112L917 104"/>
                        <path class="mini" d="M935 125l5-2 5 2v6l-5 2-5-2zM935 125l5 2 5-2M940 127v6"/>
                        <path class="menu" d="M947 125h5l-2.500 3z"/>
                    </g>

                    <!-- axis cross -->
                    <g class="axes">
                        <path d="M938 476V466" stroke="#23237c"/>
                        <path d="M938 476L945 473" stroke="#227a2a"/>
                        <path d="M938 476L947 481" stroke="#8d1620"/>
                        <path d="M938 462l2 5h-4z" fill="#23237c"/>
                        <path d="M948 471l-3 4-2-3z" fill="#227a2a"/>
                        <path d="M951 483l-6-1 2-3z" fill="#8d1620"/>
                        <text x="938" y="461">Z</text>
                        <text x="947" y="471">Y</text>
                        <text x="951" y="483">X</text>
                    </g>
                </svg>

                <div class="doctabs">
                    <div class="doctab"><svg class="icon"><use href="#logo"/></svg><span>Start page</span><button title="Close"><svg><use href="#close"/></svg></button></div>
                    <div class="doctab selected"><svg class="icon"><use href="#logo"/></svg><span>Ex27_26_12_2022 : 1*</span><button title="Close"><svg><use href="#close"/></svg></button></div>
                    <div class="doctab"><svg class="icon"><use href="#t-page"/></svg><span>Page*</span><button title="Close"><svg><use href="#close"/></svg></button></div>
                </div>
            </section>
        </main>

        <footer class="statusbar">
            <span class="message">Valid, Internal name: Symbol</span>
            <button class="nav"><svg viewBox="0 0 10 16"><rect x="1" y="1" width="8" height="14" rx="3"/><path d="M5 1v5"/></svg>TinkerCAD<i class="down"></i></button>
            <span class="dims">136.39 mm x 81.87 mm</span>
        </footer>

        <div class="taskbar">
            <span class="search"></span>
            <span class="apps"><i class="red"></i><i class="green"></i><i class="current"></i></span>
            <span class="clock">ENG</span>
            <span class="clock">5:56 PM</span>
        </div>

    </body>
</html>
```
FILE: styles.css
```
* { margin: 0; padding: 0; box-sizing: border-box; font-family: Roboto, "Open Sans", sans-serif; font-size: 6px; line-height: 8px; }
html, body { width: 100%; height: 100%; overflow: hidden; }
body { display: flex; flex-direction: column; background: #f0f0f0; color: #141414; }
button { border: none; background: none; color: inherit; cursor: pointer; }
ul { list-style: none; }
svg { display: block; flex: none; }

.sprite { position: absolute; width: 0; height: 0; }
.icon { width: 9px; height: 9px; }

.titlebar { flex: none; height: 16px; display: flex; align-items: center; background: #4b4a48; border-bottom: 1px solid #8c8b8a; color: #f2f2f2; padding-left: 3px; }
.titlebar .title { flex: 1; padding-left: 2px; }
.titlebar button { width: 23px; height: 15px; display: flex; align-items: center; justify-content: center; }
.titlebar button svg { width: 8px; height: 8px; fill: none; stroke: #f2f2f2; }

.menubar { flex: none; height: 10px; display: flex; padding-left: 1px; background: #ffffff; }
.menubar button { padding: 0 4px 0 3px; height: 10px; }
.menubar u { text-underline-offset: 1px; text-decoration-thickness: 1px; }

.toolbar { flex: none; height: 13px; display: flex; align-items: center; border-bottom: 1px solid #d6d6d6; color: #989898; }
.toolbar button { flex: none; width: 11px; height: 12px; display: flex; align-items: center; justify-content: center; }
.toolbar button svg { width: 9px; height: 9px; }
.toolbar .dark { color: #555555; }
.toolbar .mid { color: #777777; }
.toolbar .wide, .toolbar .active { display: flex; }
.toolbar .wide button { width: 12px; }
.toolbar .active { background: #c5e0f5; }
.toolbar .sep { flex: none; width: 3px; }
.toolbar .handle { flex: none; width: 5px; height: 10px; background: radial-gradient(#b4b4b4 1px, transparent 1px) 0 0 / 5px 2px; }
.toolbar .drop { width: 7px; }
.toolbar .drop::before, .down { content: ""; border: 2px solid transparent; border-top-color: #3c3c3c; border-bottom: none; }

.techdraw { max-width: 936px; border-bottom: none; }
.techdraw button { flex: 1 1 11px; }
.techdraw .drop { flex: 0 0 6px; }

.workbench { position: relative; width: 78px; height: 11px; margin: 0 1px; border: 1px solid #b4b4b4; background: #e3e3e3; display: flex; align-items: center; color: #777777; }
.workbench .icon { position: absolute; left: 2px; }
.workbench .chevron { position: absolute; right: 2px; width: 5px; height: 5px; }
.workbench select { width: 100%; height: 9px; padding-left: 12px; appearance: none; border: none; background: transparent; color: #141414; line-height: 9px; }

main { flex: 1; min-height: 0; display: flex; }

.combo { width: 236px; display: flex; flex-direction: column; }
.docktitle { height: 11px; margin-top: 1px; padding: 0 2px; display: flex; align-items: center; justify-content: space-between; background: #d8d8d8; }
.docktitle button svg { width: 6px; height: 6px; fill: none; stroke: #333333; stroke-width: 1; }
.tabs { display: flex; height: 11px; }
.tabs button { padding: 0 4px; border: 1px solid #dcdcdc; border-bottom: none; display: flex; align-items: center; gap: 1px; }
.tabs .selected { background: #ffffff; }
.tabs.bottom { background: #ffffff; height: 11px; margin-left: 1px; }
.tabs.bottom button:not(.selected) { background: #f0f0f0; }

.tree { flex: 292; min-height: 0; overflow: hidden; border: 1px solid #a9a9a9; background: #ffffff; }
.tree .head { height: 11px; display: flex; align-items: center; padding-left: 1px; }
.tree .head span { width: 50px; height: 10px; line-height: 10px; padding-left: 2px; border-right: 1px solid #e4e4e4; }
.tree .head span:first-child { width: 91px; padding-left: 1px; }
.tree .application { height: 9px; padding-left: 2px; }
.tree ul ul { padding-left: 10px; }
.row { height: 10px; display: flex; align-items: center; white-space: nowrap; }
.row .icon { margin: 0 2px 0 1px; }
.row.leaf { padding-left: 10px; }
.row.off { color: #8e8e8e; }
.row.bold { font-family: "Open Sans", sans-serif; font-weight: bold; }
.row .current { width: 71px; height: 10px; display: flex; align-items: center; border: 1px solid #8c8cb4; background: #e6e6fb; font-family: inherit; }
.row .current .icon { margin-left: 0; }
.toggle { width: 10px; height: 10px; display: flex; align-items: center; justify-content: center; color: #333333; }
.toggle svg { width: 5px; height: 5px; }

.properties { flex: 114; min-height: 0; margin: 4px 2px 0 1px; border: 1px solid #a9a9a9; background: #ffffff; }
.properties table { border-collapse: collapse; }
.properties th { width: 50px; height: 12px; padding-left: 2px; font-weight: normal; text-align: left; }
.properties th + th { border-left: 1px solid #e4e4e4; }

.mdi { flex: 1; min-width: 0; display: flex; flex-direction: column; margin-left: 2px; border-right: 1px solid #8c8c8c; }
.scene { flex: 1; min-height: 0; width: 100%; background: #ffffff; }
.solid { stroke: #1c1008; stroke-width: 1; stroke-linejoin: round; }
.grain { fill: none; stroke-width: 4; opacity: .1; }
.wood { stroke-width: 3; opacity: .12; }
.navcube path { fill: #f3f5f8; stroke: #5e6266; stroke-width: 1; }
.navcube .arrow { fill: #ececee; stroke: none; }
.navcube text { font-size: 4px; font-weight: bold; text-anchor: middle; fill: #333333; }
.navcube .x { stroke: #d02030; }
.navcube .y { stroke: #8ee08e; }
.navcube .z { stroke: #2626c8; }
.navcube .mini { fill: #e4e4e4; stroke: #cccccc; }
.navcube .menu { fill: #666666; stroke: none; }
.axes text { font-size: 5px; font-weight: bold; }

.doctabs { flex: none; height: 12px; display: flex; align-items: flex-start; border-top: 1px solid #c4c4c4; padding-left: 2px; }
.doctab { height: 10px; padding: 0 4px; display: flex; align-items: center; gap: 1px; background: #ebebeb; border-right: 1px solid #dddddd; }
.doctab.selected { background: #ffffff; }
.doctab button { margin-left: 1px; color: #a3a3a3; }
.doctab button svg { width: 8px; height: 8px; }
.doctab.selected button { color: #dd6a45; }

.statusbar { flex: none; height: 11px; display: flex; align-items: flex-end; padding-right: 9px; }
.statusbar .message { flex: 1; white-space: nowrap; }
.statusbar .nav { height: 9px; padding: 0 2px 0 8px; display: flex; align-items: center; gap: 1px; border-left: 1px solid #d4d4d4; }
.statusbar .nav svg { width: 5px; height: 8px; fill: none; stroke: #333333; stroke-width: 2; }
.statusbar .dims { padding: 0 2px; border: 1px solid #d4d4d4; border-width: 0 1px; }

.taskbar { flex: none; height: 4px; overflow: hidden; display: flex; background: #222222; color: #eeeeee; padding: 0 31px 0 24px; gap: 6px; }
.taskbar .search { width: 171px; background: #f6f6f6; }
.taskbar .apps { flex: 1; display: flex; justify-content: space-around; }
.taskbar .apps i { width: 12px; height: 1px; }
.taskbar .apps .red { background: #a03030; }
.taskbar .apps .green { background: #2a8050; }
.taskbar .apps .current { width: 27px; height: 4px; background: #555555; }
.taskbar .clock { line-height: 8px; }
```
